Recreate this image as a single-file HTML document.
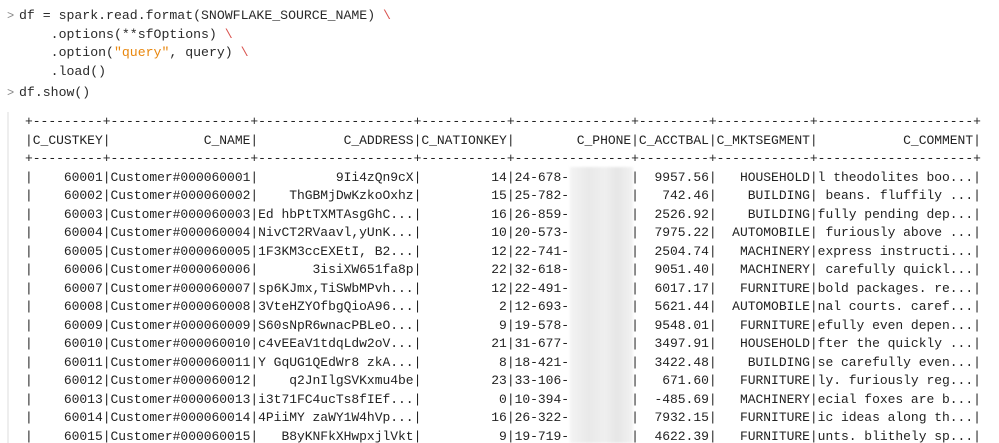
<!DOCTYPE html>
<html><head><meta charset="utf-8"><style>
html,body{margin:0;padding:0;background:#fff;width:999px;height:443px;overflow:hidden;}
body{font-family:"Liberation Mono","DejaVu Sans Mono",monospace;font-size:13px;color:#2a2a2a;position:relative;}
.code{position:absolute;left:19px;top:7px;margin:0;line-height:18.5px;white-space:pre;font-family:inherit;font-size:13.2px;}
.code2{top:84px;}
.chev{position:absolute;left:7px;color:#888;font-size:12px;}
.r{color:#d9534f}.o{color:#e8870e}
.out{position:absolute;left:7px;top:112px;width:992px;height:331px;border-left:2px solid #eeeeee;}
.tbl{position:absolute;left:25px;top:113px;margin:0;line-height:18.5px;white-space:pre;color:#222;font-family:inherit;letter-spacing:-0.03px;}
.blur{position:absolute;left:570px;top:167px;width:63px;height:276px;background:linear-gradient(90deg,#f3f3f3,#e9e9e9 30%,#efefef 55%,#e6e6e6 75%,#f2f2f2);filter:blur(1px);}
</style></head><body>
<span class="chev" style="top:9px">&gt;</span>
<pre class="code">df = spark.read.format(SNOWFLAKE_SOURCE_NAME) <span class="r">\</span>
    .options(**sfOptions) <span class="r">\</span>
    .option(<span class="o">"query"</span>, query) <span class="r">\</span>
    .load()</pre>
<span class="chev" style="top:86px">&gt;</span>
<pre class="code code2">df.show()</pre>
<div class="out"></div>
<pre class="tbl">+---------+------------------+--------------------+-----------+---------------+---------+------------+--------------------+
|C_CUSTKEY|            C_NAME|           C_ADDRESS|C_NATIONKEY|        C_PHONE|C_ACCTBAL|C_MKTSEGMENT|           C_COMMENT|
+---------+------------------+--------------------+-----------+---------------+---------+------------+--------------------+
|    60001|Customer#000060001|          9Ii4zQn9cX|         14|24-678-        |  9957.56|   HOUSEHOLD|l theodolites boo...|
|    60002|Customer#000060002|    ThGBMjDwKzkoOxhz|         15|25-782-        |   742.46|    BUILDING| beans. fluffily ...|
|    60003|Customer#000060003|Ed hbPtTXMTAsgGhC...|         16|26-859-        |  2526.92|    BUILDING|fully pending dep...|
|    60004|Customer#000060004|NivCT2RVaavl,yUnK...|         10|20-573-        |  7975.22|  AUTOMOBILE| furiously above ...|
|    60005|Customer#000060005|1F3KM3ccEXEtI, B2...|         12|22-741-        |  2504.74|   MACHINERY|express instructi...|
|    60006|Customer#000060006|       3isiXW651fa8p|         22|32-618-        |  9051.40|   MACHINERY| carefully quickl...|
|    60007|Customer#000060007|sp6KJmx,TiSWbMPvh...|         12|22-491-        |  6017.17|   FURNITURE|bold packages. re...|
|    60008|Customer#000060008|3VteHZYOfbgQioA96...|          2|12-693-        |  5621.44|  AUTOMOBILE|nal courts. caref...|
|    60009|Customer#000060009|S60sNpR6wnacPBLeO...|          9|19-578-        |  9548.01|   FURNITURE|efully even depen...|
|    60010|Customer#000060010|c4vEEaV1tdqLdw2oV...|         21|31-677-        |  3497.91|   HOUSEHOLD|fter the quickly ...|
|    60011|Customer#000060011|Y GqUG1QEdWr8 zkA...|          8|18-421-        |  3422.48|    BUILDING|se carefully even...|
|    60012|Customer#000060012|    q2JnIlgSVKxmu4be|         23|33-106-        |   671.60|   FURNITURE|ly. furiously reg...|
|    60013|Customer#000060013|i3t71FC4ucTs8fIEf...|          0|10-394-        |  -485.69|   MACHINERY|ecial foxes are b...|
|    60014|Customer#000060014|4PiiMY zaWY1W4hVp...|         16|26-322-        |  7932.15|   FURNITURE|ic ideas along th...|
|    60015|Customer#000060015|   B8yKNFkXHwpxjlVkt|          9|19-719-        |  4622.39|   FURNITURE|unts. blithely sp...|</pre>
<div class="blur"></div>
</body></html>
